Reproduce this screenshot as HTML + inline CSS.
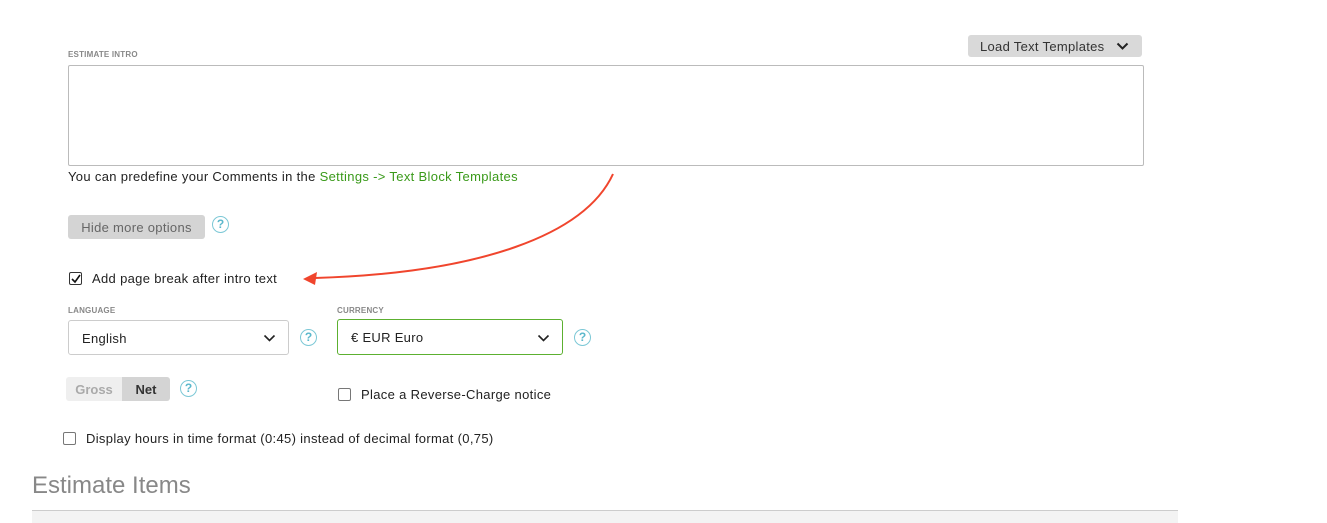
<!DOCTYPE html>
<html><head><style>
body{margin:0;width:1327px;height:522px;background:#fff;font-family:"Liberation Sans",sans-serif;position:relative;overflow:hidden;color:#222}
.a{position:absolute}
.lbl{font-size:8px;font-weight:bold;color:#888;letter-spacing:.2px}
.t{font-size:13px;letter-spacing:.33px}
.q{width:17px;height:17px;border:1.5px solid #7cc8d6;border-radius:50%;color:#5bb8cc;font-size:12px;font-weight:bold;text-align:center;box-sizing:border-box;line-height:15px}
.cb{width:13px;height:13px;border:1px solid #777;border-radius:2px;box-sizing:border-box}
.sel{border:1px solid #ccc;border-radius:3px;box-sizing:border-box;font-size:13px;line-height:35px;padding-left:13px;letter-spacing:.3px}
</style></head><body>
<div class="a lbl" style="left:68px;top:50px">ESTIMATE INTRO</div>
<div class="a" style="left:968px;top:35px;width:174px;height:22px;background:#d9d9d9;border-radius:3px;font-size:13px;line-height:23px;color:#333;padding-left:12px;box-sizing:border-box;letter-spacing:.3px">Load Text Templates
<svg class="a" style="left:148px;top:7px" width="13" height="9" viewBox="0 0 13 9"><path d="M1.5 1.5L6.5 6.5L11.5 1.5" stroke="#222" stroke-width="2" fill="none"/></svg></div>
<div class="a" style="left:68px;top:65px;width:1076px;height:101px;border:1px solid #bbb;border-radius:2px;box-sizing:border-box"></div>
<div class="a t" style="left:68px;top:169px">You can predefine your Comments in the <span style="color:#3a9a1a">Settings -&gt; Text Block Templates</span></div>
<div class="a" style="left:68px;top:215px;width:137px;height:24px;background:#d4d4d4;border-radius:3px;font-size:13px;line-height:25px;color:#666;text-align:center;letter-spacing:.3px">Hide more options</div>
<div class="a q" style="left:212px;top:216px">?</div>
<svg class="a" style="left:0;top:0" width="1327" height="522"><path d="M613 174C585 235 480 273 315 278" stroke="#f0452d" stroke-width="2" fill="none"/><path d="M303 279L317 272L315 285Z" fill="#f0452d"/></svg>
<div class="a cb" style="left:69px;top:272px;border-color:#333"></div>
<svg class="a" style="left:70px;top:273px" width="12" height="12"><path d="M2 6L5 9L10 2" stroke="#111" stroke-width="1.6" fill="none"/></svg>
<div class="a t" style="left:92px;top:271px">Add page break after intro text</div>
<div class="a lbl" style="left:68px;top:306px">LANGUAGE</div>
<div class="a lbl" style="left:337px;top:306px">CURRENCY</div>
<div class="a sel" style="left:68px;top:320px;width:221px;height:35px">English
<svg class="a" style="left:194px;top:13px" width="13" height="9"><path d="M1.5 1.5L6.5 6.5L11.5 1.5" stroke="#222" stroke-width="1.6" fill="none"/></svg></div>
<div class="a q" style="left:300px;top:329px">?</div>
<div class="a sel" style="left:337px;top:319px;width:226px;height:36px;border-color:#5cb030">€ EUR Euro
<svg class="a" style="left:199px;top:14px" width="13" height="9"><path d="M1.5 1.5L6.5 6.5L11.5 1.5" stroke="#222" stroke-width="1.6" fill="none"/></svg></div>
<div class="a q" style="left:574px;top:329px">?</div>
<div class="a" style="left:66px;top:377px;width:56px;height:24px;background:#efefef;border-radius:3px 0 0 3px;color:#aaa;font-size:13px;font-weight:bold;text-align:center;line-height:25px">Gross</div>
<div class="a" style="left:122px;top:377px;width:48px;height:24px;background:#d4d4d4;border-radius:0 3px 3px 0;color:#333;font-size:13px;font-weight:bold;text-align:center;line-height:25px">Net</div>
<div class="a q" style="left:180px;top:380px">?</div>
<div class="a cb" style="left:338px;top:388px"></div>
<div class="a t" style="left:361px;top:387px">Place a Reverse-Charge notice</div>
<div class="a cb" style="left:63px;top:432px"></div>
<div class="a t" style="left:86px;top:431px">Display hours in time format (0:45) instead of decimal format (0,75)</div>
<div class="a" style="left:32px;top:472px;font-size:24px;color:#888;font-weight:300">Estimate Items</div>
<div class="a" style="left:32px;top:510px;width:1146px;height:12px;background:#f3f3f3;border-top:1px solid #ccc"></div>
</body></html>
